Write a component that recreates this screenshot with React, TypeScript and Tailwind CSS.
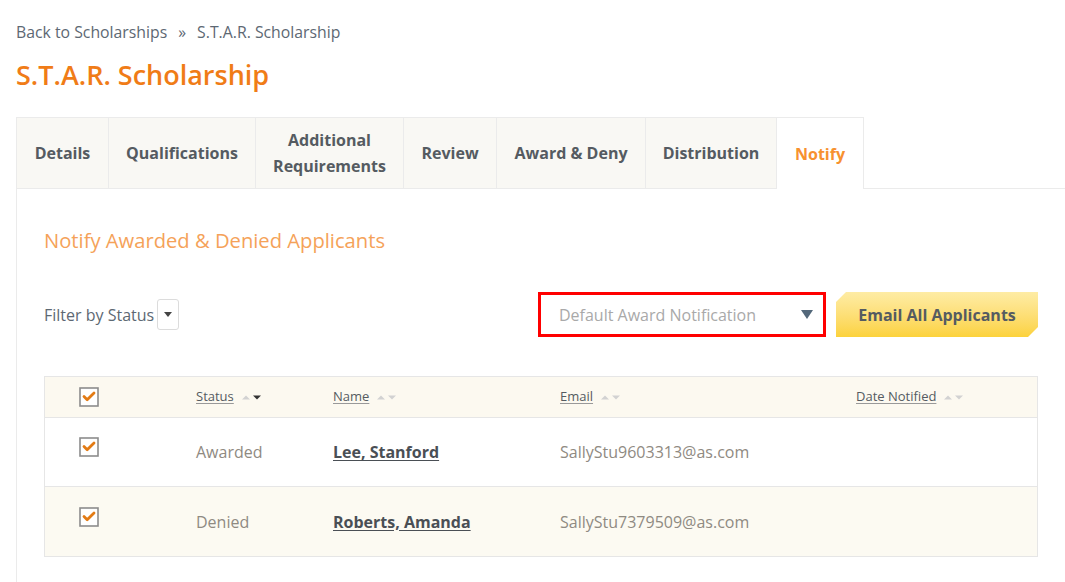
import React from 'react';

const tabs = [
  { label: 'Details', w: 'w-[92px]' },
  { label: 'Qualifications', w: 'w-[147px]' },
  { label: 'Additional Requirements', w: 'w-[148px]' },
  { label: 'Review', w: 'w-[93px]' },
  { label: 'Award & Deny', w: 'w-[149px]' },
  { label: 'Distribution', w: 'w-[131px]' },
  { label: 'Notify', w: 'w-[88px]', active: true },
];

const rows = [
  { status: 'Awarded', name: 'Lee, Stanford', email: 'SallyStu9603313@as.com', bg: 'bg-white' },
  { status: 'Denied', name: 'Roberts, Amanda', email: 'SallyStu7379509@as.com', bg: 'bg-[#fcfaf2]' },
];

const CheckBox = () => (
  <svg width="20" height="20" viewBox="0 0 20 20">
    <rect x="1" y="1" width="18" height="18" fill="#fff" stroke="#8c8c8c" strokeWidth="1.6" />
    <path d="M5 9.5l3.2 3.2L15 6" fill="none" stroke="#e37b14" strokeWidth="2.8" strokeLinecap="round" strokeLinejoin="round" />
  </svg>
);

const SortArrows = ({ activeDown = false }: { activeDown?: boolean }) => (
  <svg width="20" height="8" viewBox="0 0 20 8" className="ml-2 inline-block">
    <path d="M0 6.5L4 2.5L8 6.5Z" fill="#d2d2d2" />
    <path d="M11 2.5L19 2.5L15 6.5Z" fill={activeDown ? '#333' : '#d2d2d2'} />
  </svg>
);

const HeaderCell = ({ label, activeDown }: { label: string; activeDown?: boolean }) => (
  <span className="flex items-center text-[13px] text-[#555b61]">
    <span className="underline underline-offset-2 decoration-[#999]">{label}</span>
    <SortArrows activeDown={activeDown} />
  </span>
);

export default function App() {
  return (
    <div className="w-[1065px] h-[582px] overflow-hidden bg-white font-['Open_Sans',sans-serif]">
      <div className="pl-4 pt-[21px]">
        {/* Breadcrumb */}
        <div className="flex items-center text-[15.8px] text-[#5d6873] leading-[22px]">
          <span>Back to Scholarships</span>
          <span className="mx-[11px]">»</span>
          <span>S.T.A.R. Scholarship</span>
        </div>
        <h1 className="mt-[17px] text-[27px] leading-[30px] font-semibold text-[#f07c17]">S.T.A.R. Scholarship</h1>

        {/* Tabs */}
        <div className="mt-[27px] flex w-[1060px]">
          {tabs.map((t) => (
            <div
              key={t.label}
              className={`${t.w} h-[72px] flex items-center justify-center text-center text-[16px] leading-[26px] font-bold border-t border-l border-[#ebebeb] ${
                t.active ? 'bg-white text-[#f7912f] border-r' : 'bg-[#f9f8f4] text-[#555b61] border-b'
              }`}
            >
              <span className={t.label === 'Additional Requirements' ? 'px-5' : ''}>{t.label}</span>
            </div>
          ))}
          <div className="flex-1 border-b border-[#ebebeb]" />
        </div>

        {/* Panel */}
        <div className="w-[1060px] h-[400px] border-l border-[#ebebeb] pl-[27px] pt-[37px]">
          <h2 className="text-[20.2px] leading-[28px] text-[#f5a259]">Notify Awarded &amp; Denied Applicants</h2>

          <div className="mt-[38px] flex items-center w-[994px]">
            <span className="text-[16px] text-[#5d6873]">Filter by Status</span>
            <span className="ml-[3px] w-[22px] h-[31px] border border-[#dcdcdc] rounded-[3px] flex items-center justify-center">
              <svg width="8" height="5" viewBox="0 0 8 5"><path d="M0 0h8L4 5Z" fill="#444" /></svg>
            </span>
            <div className="ml-auto w-[288px] h-[45px] border-[3px] border-[#ff0000] flex items-center pl-[18px] pr-[10px]">
              <span className="text-[16px] text-[#a9a9a9] flex-1">Default Award Notification</span>
              <svg width="12" height="9" viewBox="0 0 12 9"><path d="M0 0h12L6 9Z" fill="#53687a" /></svg>
            </div>
            <button className="ml-[10px] w-[202px] h-[45px] bg-linear-to-b from-[#feeca4] to-[#fcd23a] text-[16px] font-bold text-[#555b61] [clip-path:polygon(10px_0,100%_0,100%_calc(100%-10px),calc(100%-10px)_100%,0_100%,0_10px)]">
              Email All Applicants
            </button>
          </div>

          {/* Table */}
          <div className="mt-[39px] w-[994px] border border-[#e6e6e6]">
            <div className="h-[41px] bg-[#fcf9f0] flex items-center border-b border-[#e6e6e6]">
              <div className="w-[151px] pl-[34px] flex items-center"><CheckBox /></div>
              <div className="w-[137px]"><HeaderCell label="Status" activeDown /></div>
              <div className="w-[227px]"><HeaderCell label="Name" /></div>
              <div className="w-[296px]"><HeaderCell label="Email" /></div>
              <div className="flex-1"><HeaderCell label="Date Notified" /></div>
            </div>
            {rows.map((r, i) => (
              <div
                key={r.name}
                className={`h-[69px] ${r.bg} flex items-center ${i === 0 ? 'border-b border-[#e6e6e6]' : ''}`}
              >
                <div className="w-[151px] pl-[34px] flex items-center -mt-[10px]"><CheckBox /></div>
                <div className="w-[137px] text-[16px] text-[#8f8a82]">{r.status}</div>
                <div className="w-[227px] text-[16px] font-bold text-[#4a4f55] underline underline-offset-2">{r.name}</div>
                <div className="w-[296px] text-[16px] text-[#8f8a82]">{r.email}</div>
                <div className="flex-1" />
              </div>
            ))}
          </div>
        </div>
      </div>
    </div>
  );
}
